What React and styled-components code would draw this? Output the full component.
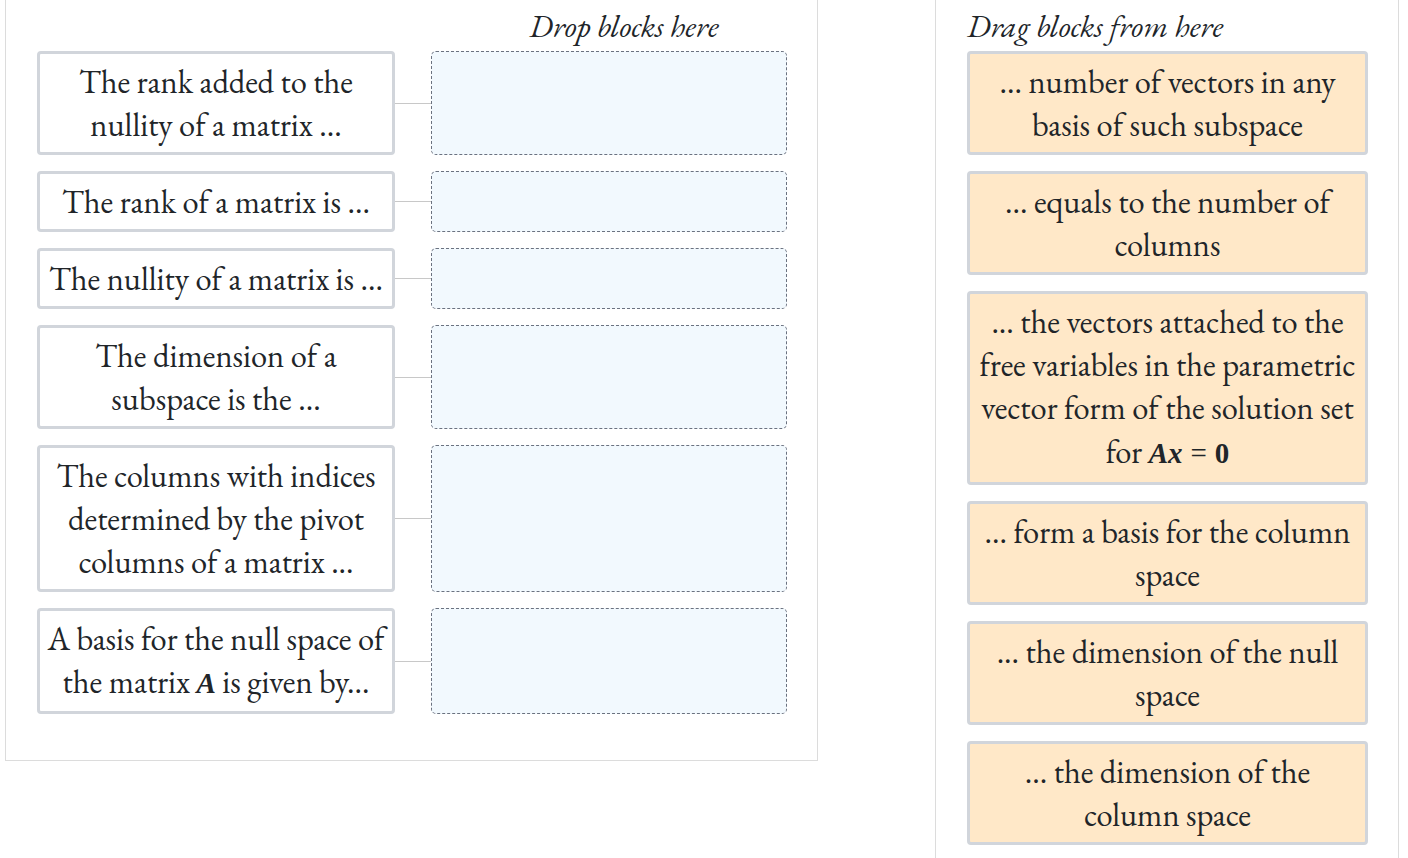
import React from 'react';
import styled, { createGlobalStyle } from 'styled-components';

const serif = '"EB Garamond", "Liberation Serif", serif';
const mathFont = '"Liberation Serif", "DejaVu Serif", serif';

const GlobalStyle = createGlobalStyle`
    body {
        margin: 0;
        background: #fff;
        color: #212529;
        font-family: ${serif};
    }
`;

const Page = styled.div`
    display: flex;
    align-items: flex-start;
    gap: 117px;
    padding-left: 5px;
`;

const MatchPanel = styled.section`
    box-sizing: border-box;
    width: 813px;
    border: 1px solid #dcdcdc;
    border-top: none;
    padding: 4px 31px 46px 31px;
`;

const SourcePanel = styled.section`
    box-sizing: border-box;
    width: 464px;
    min-height: 880px;
    border-left: 1px solid #dcdcdc;
    border-right: 1px solid #dcdcdc;
    padding: 4px 30px 30px 31px;
`;

const Heading = styled.h3`
    margin: 0 ${(props) => (props.center ? '-31px' : '0')} 3px 0;
    padding-left: ${(props) => (props.center ? '394px' : '0')};
    font-family: ${serif};
    font-size: 31.5px;
    line-height: 44px;
    font-weight: normal;
    font-style: italic;
    text-align: ${(props) => (props.center ? 'center' : 'left')};
`;

const MatchGrid = styled.div`
    display: grid;
    grid-template-columns: 358px 36px 356px;
    row-gap: 16px;
`;

const Block = styled.div`
    box-sizing: border-box;
    border: 3px solid #d1d5db;
    border-radius: 4px;
    padding: 6px 6px;
    font-family: ${serif};
    font-size: 32.5px;
    line-height: 43px;
    text-align: center;
    white-space: nowrap;
    background: ${(props) => (props.source ? '#ffe8c8' : '#fff')};
`;

const Connector = styled.div`
    display: flex;
    align-items: center;
    &::before {
        content: '';
        flex: 1;
        height: 1px;
        background: #c8c8c8;
    }
`;

const DropZone = styled.div`
    border: 1px dashed #6b7280;
    border-radius: 5px;
    background: #f2f9fe;
`;

const SourceList = styled.div`
    display: flex;
    flex-direction: column;
    gap: 16px;
`;

const Formula = styled.span`
    display: inline-block;
    line-height: 45px;
`;

const MathVar = styled.span`
    font-family: ${mathFont};
    font-size: 29px;
    font-weight: bold;
    font-style: italic;
`;

const MathNum = styled.span`
    font-family: ${mathFont};
    font-size: 29px;
    font-weight: bold;
`;

const MathOp = styled.span`
    font-family: ${mathFont};
    font-size: 29px;
    margin: 0 8px;
`;

const prompts = [
    ['The rank added to the', 'nullity of a matrix ...'],
    ['The rank of a matrix is ...'],
    ['The nullity of a matrix is ...'],
    ['The dimension of a', 'subspace is the ...'],
    ['The columns with indices', 'determined by the pivot', 'columns of a matrix ...'],
    ['A basis for the null space of', <>the matrix <MathVar>A</MathVar> is given by...</>],
];

const answers = [
    ['... number of vectors in any', 'basis of such subspace'],
    ['... equals to the number of', 'columns'],
    [
        '... the vectors attached to the',
        'free variables in the parametric',
        'vector form of the solution set',
        <Formula>for <MathVar>Ax</MathVar><MathOp>=</MathOp><MathNum>0</MathNum></Formula>,
    ],
    ['... form a basis for the column', 'space'],
    ['... the dimension of the null', 'space'],
    ['... the dimension of the', 'column space'],
];

const Lines = ({ lines }) =>
    lines.map((line, i) => (
        <React.Fragment key={i}>
            {i > 0 && <br />}
            {line}
        </React.Fragment>
    ));

const App = () => (
    <>
        <GlobalStyle />
        <Page>
            <MatchPanel>
                <Heading center>Drop blocks here</Heading>
                <MatchGrid>
                    {prompts.map((lines, i) => (
                        <React.Fragment key={i}>
                            <Block>
                                <Lines lines={lines} />
                            </Block>
                            <Connector />
                            <DropZone />
                        </React.Fragment>
                    ))}
                </MatchGrid>
            </MatchPanel>
            <SourcePanel>
                <Heading>Drag blocks from here</Heading>
                <SourceList>
                    {answers.map((lines, i) => (
                        <Block source key={i}>
                            <Lines lines={lines} />
                        </Block>
                    ))}
                </SourceList>
            </SourcePanel>
        </Page>
    </>
);

export default App;
